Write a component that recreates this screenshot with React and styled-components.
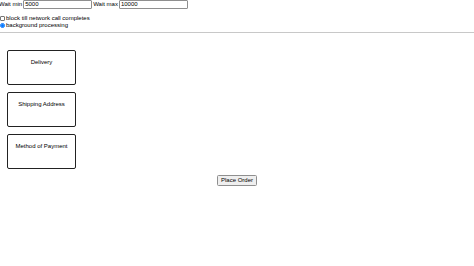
import React, { useState } from "react";
import styled, { createGlobalStyle } from "styled-components";

const GlobalStyle = createGlobalStyle`
  body {
    margin: 0;
    font-family: "Liberation Sans", Arial, sans-serif;
    font-size: 6px;
    color: #000;
    background: #fff;
  }
`;

const Controls = styled.div`
  display: flex;
  align-items: center;
  margin-left: -1px;
  height: 9px;
`;

const Label = styled.label`
  display: flex;
  align-items: center;
  line-height: 9px;
`;

const NumberInput = styled.input`
  box-sizing: border-box;
  width: 69px;
  height: 9px;
  margin: 0 1px 0 1px;
  padding: 0 1px;
  border: 1px solid #8f8f8f;
  border-radius: 1px;
  font: inherit;
  font-size: 6px;
`;

const Options = styled.div`
  margin-top: 6px;
  display: flex;
  flex-direction: column;
`;

const Option = styled.label`
  display: flex;
  align-items: center;
  height: 7px;
  line-height: 7px;

  input {
    width: 5px;
    height: 5px;
    margin: 0 1px 0 0;
  }

  input[type="checkbox"] {
    appearance: none;
    box-sizing: border-box;
    border: 1px solid #767676;
    border-radius: 1px;
    background: #fff;
  }
`;

const Divider = styled.hr`
  margin: 3px 0 0;
  border: none;
  border-top: 1px solid #c8c8c8;
`;

const Steps = styled.div`
  display: flex;
  flex-direction: column;
  gap: 7px;
  padding: 17px 0 0 7px;
`;

const StepCard = styled.div`
  box-sizing: border-box;
  width: 69px;
  height: 35px;
  border: 1.5px solid #222;
  border-radius: 2px;
  padding-top: 8px;
  text-align: center;
`;

const Footer = styled.div`
  display: flex;
  justify-content: center;
  margin-top: 6px;
`;

const PlaceButton = styled.button`
  box-sizing: border-box;
  height: 11px;
  padding: 0 3px;
  font: inherit;
  font-size: 6px;
  line-height: 9px;
  border: 1px solid #8f8f8f;
  border-radius: 1.5px;
  background: #efefef;
`;

const steps = ["Delivery", "Shipping Address", "Method of Payment"];

export default function App() {
  const [waitMin, setWaitMin] = useState("5000");
  const [waitMax, setWaitMax] = useState("10000");
  const [mode, setMode] = useState("background");

  return (
    <>
      <GlobalStyle />
      <Controls>
        <Label>
          Wait min
          <NumberInput value={waitMin} onChange={e => setWaitMin(e.target.value)} />
        </Label>
        <Label>
          Wait max
          <NumberInput value={waitMax} onChange={e => setWaitMax(e.target.value)} />
        </Label>
      </Controls>
      <Options>
        <Option>
          <input
            type="checkbox"
            checked={mode === "block"}
            onChange={() => setMode("block")}
          />
          block till network call completes
        </Option>
        <Option>
          <input
            type="radio"
            checked={mode === "background"}
            onChange={() => setMode("background")}
          />
          background processing
        </Option>
      </Options>
      <Divider />
      <Steps>
        {steps.map(step => (
          <StepCard key={step}>{step}</StepCard>
        ))}
      </Steps>
      <Footer>
        <PlaceButton>Place Order</PlaceButton>
      </Footer>
    </>
  );
}
